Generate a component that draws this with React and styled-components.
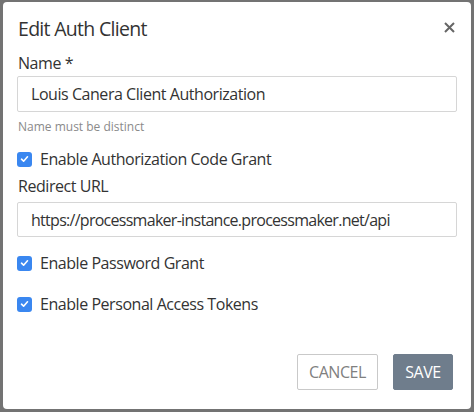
import React from "react";
import styled, { createGlobalStyle } from "styled-components";

const Global = createGlobalStyle`
  html, body { margin: 0; padding: 0; }
  body {
    background: #737373;
    font-family: "Open Sans", "Noto Sans", sans-serif;
    letter-spacing: -0.45px;
    width: 474px;
    height: 412px;
    overflow: hidden;
  }
`;

const Backdrop = styled.div`
  padding: 2px 3px 3px 3px;
  box-sizing: border-box;
  width: 474px;
  height: 412px;
`;

const Modal = styled.div`
  background: #fff;
  border-radius: 4px;
  height: 407px;
  box-sizing: border-box;
  display: flex;
  flex-direction: column;
  padding: 0 15px 0 14px;
  color: #333;
`;

const Header = styled.div`
  display: flex;
  justify-content: space-between;
  align-items: flex-start;
  padding-top: 13px;
`;

const Title = styled.h2`
  margin: 0;
  font-size: 19.5px;
  font-weight: 400;
  letter-spacing: -0.7px;
  line-height: 28px;
  color: #333;
  padding-left: 1px;
`;

const Close = styled.button`
  border: none;
  background: none;
  padding: 0;
  margin: 5px 0 0 0;
  width: 14px;
  height: 14px;
  display: flex;
  align-items: center;
  justify-content: center;
  cursor: pointer;
`;

const Label = styled.div`
  font-size: 16px;
  line-height: 22px;
  color: #333;
  padding-left: 1px;
  margin-top: ${(p) => p.$mt || 0}px;
`;

const Input = styled.div`
  margin-top: ${(p) => p.$mt || 0}px;
  height: ${(p) => p.$h || 36}px;
  box-sizing: border-box;
  border: 1px solid #d6d6d6;
  border-radius: 2px;
  display: flex;
  align-items: center;
  padding-left: 13px;
  font-size: 16px;
  letter-spacing: ${(p) => p.$ls ?? -0.45}px;
  color: #333;
  width: 440px;
`;

const Help = styled.div`
  font-size: 12px;
  line-height: 16px;
  color: #8a8a8a;
  letter-spacing: 0;
  margin-top: 7px;
  padding-left: 1px;
`;

const CheckRow = styled.div`
  display: flex;
  align-items: center;
  gap: 8px;
  margin-top: ${(p) => p.$mt || 0}px;
  font-size: 16px;
  line-height: 22px;
  color: #333;
`;

const Box = styled.span`
  width: 15px;
  height: 15px;
  border-radius: 3px;
  background: #3a87f0;
  display: flex;
  align-items: center;
  justify-content: center;
`;

const Footer = styled.div`
  margin-top: auto;
  display: flex;
  justify-content: flex-end;
  gap: 15px;
  padding: 0 3px 19px 0;
`;

const Button = styled.button`
  height: 36px;
  width: ${(p) => (p.$primary ? 60 : 81)}px;
  box-sizing: border-box;
  border-radius: 2px;
  font-family: inherit;
  letter-spacing: -0.45px;
  font-size: 16px;
  padding: 0;
  margin: 0;
  border: 1px solid ${(p) => (p.$primary ? "#6f7d8c" : "#c9c9c9")};
  background: ${(p) => (p.$primary ? "#6f7d8c" : "#fff")};
  color: ${(p) => (p.$primary ? "#fff" : "#808080")};
`;

const Check = () => (
  <Box>
    <svg width="9" height="8" viewBox="0 0 9 8">
      <path d="M1.5 4.2 L3.6 6.2 L7.5 1.8" fill="none" stroke="#fff" strokeWidth="1.6" strokeLinecap="round" strokeLinejoin="round" />
    </svg>
  </Box>
);

export default function App() {
  return (
    <>
      <Global />
      <Backdrop>
        <Modal>
          <Header>
            <Title>Edit Auth Client</Title>
            <Close aria-label="Close">
              <svg width="11" height="11" viewBox="0 0 11 11">
                <path d="M1 1 L10 10 M10 1 L1 10" stroke="#666" strokeWidth="2" strokeLinecap="butt" />
              </svg>
            </Close>
          </Header>
          <Label $mt={9}>Name *</Label>
          <Input $mt={2}>Louis Canera Client Authorization</Input>
          <Help>Name must be distinct</Help>
          <CheckRow $mt={13}>
            <Check />
            Enable Authorization Code Grant
          </CheckRow>
          <Label $mt={5}>Redirect URL</Label>
          <Input $mt={5} $h={35} $ls={-0.72}>https://processmaker-instance.processmaker.net/api</Input>
          <CheckRow $mt={15}>
            <Check />
            Enable Password Grant
          </CheckRow>
          <CheckRow $mt={19}>
            <Check />
            Enable Personal Access Tokens
          </CheckRow>
          <Footer>
            <Button>CANCEL</Button>
            <Button $primary>SAVE</Button>
          </Footer>
        </Modal>
      </Backdrop>
    </>
  );
}
